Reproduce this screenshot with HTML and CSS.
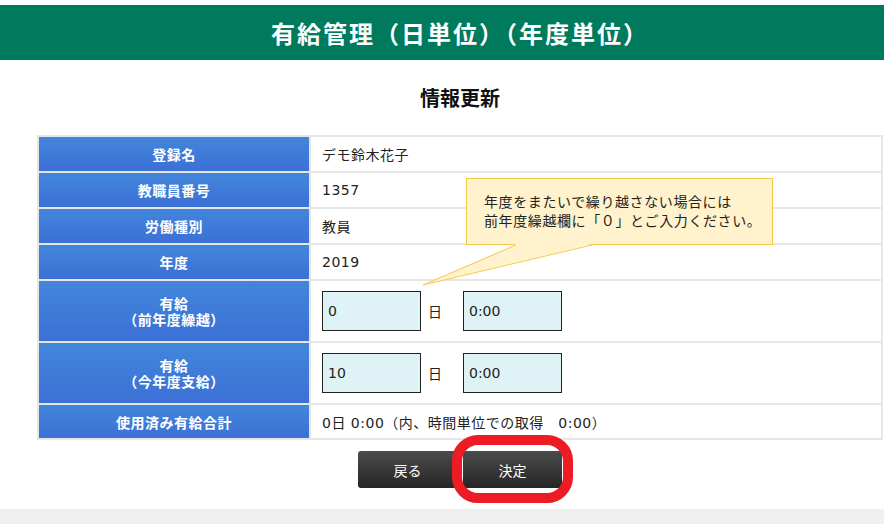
FILE: index.html
```html
<!DOCTYPE html>
<html lang="ja">
<head>
  <meta charset="UTF-8" />
  <title>有給管理</title>
  <link rel="stylesheet" href="styles.css">
</head>
<body>

<div id="page">
  <div id="page-heading">有給管理（日単位）（年度単位）</div>

  <div id="content">
    <h2 class="section-title">情報更新</h2>

    <table class="info-table">
      <tr class="row-single">
        <th>登録名</th>
        <td>デモ鈴木花子</td>
      </tr>
      <tr class="row-single">
        <th>教職員番号</th>
        <td>1357</td>
      </tr>
      <tr class="row-single">
        <th>労働種別</th>
        <td>教員</td>
      </tr>
      <tr class="row-single">
        <th>年度</th>
        <td>2019</td>
      </tr>
      <tr class="row-double">
        <th>有給<br>（前年度繰越）</th>
        <td>
          <div class="input-line">
            <input class="num-input" type="text" value="0">
            <span class="unit">日</span>
            <input class="num-input" type="text" value="0:00">
          </div>
        </td>
      </tr>
      <tr class="row-double">
        <th>有給<br>（今年度支給）</th>
        <td>
          <div class="input-line">
            <input class="num-input" type="text" value="10">
            <span class="unit">日</span>
            <input class="num-input" type="text" value="0:00">
          </div>
        </td>
      </tr>
      <tr class="row-last">
        <th>使用済み有給合計</th>
        <td>0日 0:00（内、時間単位での取得　0:00）</td>
      </tr>
    </table>

    <div id="buttons">
      <button class="act-btn">戻る</button>
      <button class="act-btn">決定</button>
    </div>

    <!-- hint balloon -->
    <div id="balloon">年度をまたいで繰り越さない場合には<br>前年度繰越欄に「０」とご入力ください。</div>
    <svg id="balloon-tail" width="176" height="44" viewBox="0 0 176 44">
      <polygon points="96,0 172,0 3,41" fill="#fff2cc" />
      <polyline points="96,1 3,41 172,1" fill="none" stroke="#f7c94b" stroke-width="1" />
    </svg>

    <!-- red mark round the submit button -->
    <div id="mark"></div>
  </div>

  <div id="footer"></div>
</div>

</body>
</html>
```

FILE: styles.css
```css
html, body {
  margin: 0;
  overflow: hidden;
}

body {
  background: #fff;
  color: #222;
  font-family: "Noto Sans CJK JP", "Noto Sans", sans-serif;
  font-size: 14px;
  padding-top: 5px;
}

#page {
  width: 920px;
}

#page-heading {
  height: 55px;
  line-height: 55px;
  background: #007a5d;
  color: #fff;
  font-size: 24px;
  font-weight: bold;
  letter-spacing: 2px;
  text-align: center;
}

#content {
  display: flow-root;
  position: relative;
  padding-bottom: 21px;
}

.section-title {
  margin: 24px 0 23px;
  height: 28px;
  line-height: 28px;
  font-size: 20px;
  font-weight: bold;
  text-align: center;
  color: #111;
}

.info-table {
  margin: 0 auto;
  width: 846px;
  border-collapse: separate;
  border-spacing: 2px;
  background: #e6e6e6;
}

.info-table th {
  width: 270px;
  padding: 0;
  background: linear-gradient(#4286db, #3c70d6);
  color: #fff;
  font-size: 14px;
  font-weight: bold;
  line-height: 16px;
  letter-spacing: 0.5px;
  text-align: center;
}

.info-table td {
  padding: 0 11px;
  background: #fff;
  font-family: "DejaVu Sans", "Noto Sans CJK JP", sans-serif;
  font-size: 14px;
  letter-spacing: 0.5px;
}

.row-single th,
.row-single td {
  height: 34px;
}

.row-double th,
.row-double td {
  height: 60px;
}

.row-last th,
.row-last td {
  height: 33px;
}

.input-line {
  display: flex;
  align-items: center;
}

.num-input {
  box-sizing: border-box;
  width: 99px;
  height: 40px;
  padding: 0 5px;
  margin: 0;
  border: 1px solid #222;
  background: #dff3f6;
  color: #222;
  font-family: "DejaVu Sans", sans-serif;
  font-size: 14px;
}

.unit {
  width: 35px;
  padding-left: 7px;
  font-family: "Noto Sans CJK JP", sans-serif;
}

#buttons {
  display: flex;
  justify-content: center;
  gap: 6px;
  margin-top: 11px;
}

.act-btn {
  width: 99px;
  height: 37px;
  border: none;
  border-radius: 3px;
  background: linear-gradient(#4b4b4b, #262626);
  color: #fff;
  font-family: inherit;
  font-size: 14px;
  cursor: pointer;
}

#balloon {
  position: absolute;
  left: 466px;
  top: 118px;
  box-sizing: border-box;
  width: 307px;
  height: 67px;
  padding: 13px 0 0 17px;
  background: #fff2cc;
  border: 1px solid #f7c94b;
  font-size: 14px;
  line-height: 19px;
  letter-spacing: 0.6px;
  color: #222;
}

#balloon-tail {
  position: absolute;
  left: 420px;
  top: 184px;
}

#mark {
  position: absolute;
  left: 452px;
  top: 375px;
  box-sizing: border-box;
  width: 121px;
  height: 68px;
  border: 10px solid #ed1c24;
  border-radius: 26px;
}

#footer {
  height: 40px;
  background: #f0f0f0;
}
```
